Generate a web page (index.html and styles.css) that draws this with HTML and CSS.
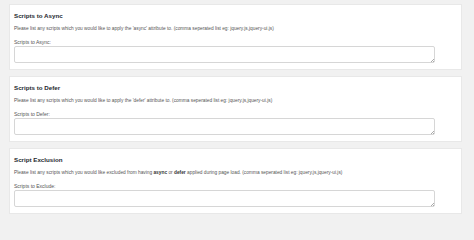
FILE: index.html
```html
<!DOCTYPE html>
<html>
<head>
<meta charset="utf-8">
<link rel="stylesheet" href="styles.css">
</head>
<body>
<div class="wrap">
  <div class="card">
    <h2 class="card-title">Scripts to Async</h2>
    <p class="desc">Please list any scripts which you would like to apply the 'async' attribute to. (comma seperated list eg: jquery.js,jquery-ui.js)</p>
    <label class="label">Scripts to Async:</label>
    <div class="field-wrap"><textarea class="field"></textarea></div>
  </div>
  <div class="card">
    <h2 class="card-title">Scripts to Defer</h2>
    <p class="desc">Please list any scripts which you would like to apply the 'defer' attribute to. (comma seperated list eg: jquery.js,jquery-ui.js)</p>
    <label class="label">Scripts to Defer:</label>
    <div class="field-wrap"><textarea class="field"></textarea></div>
  </div>
  <div class="card">
    <h2 class="card-title">Script Exclusion</h2>
    <p class="desc">Please list any scripts which you would like excluded from having <b>async</b> or <b>defer</b> applied during page load. (comma seperated list eg: jquery.js,jquery-ui.js)</p>
    <label class="label">Scripts to Exclude:</label>
    <div class="field-wrap"><textarea class="field"></textarea></div>
  </div>
</div>
</body>
</html>
```
FILE: styles.css
```css
html, body {
  margin: 0;
  padding: 0;
  background: #f1f1f1;
  font-family: "Liberation Sans", Arial, sans-serif;
  color: #23282d;
}
.wrap {
  padding: 4px 12px 0 9px;
  display: flex;
  flex-direction: column;
  gap: 6px;
}
.card {
  background: #fff;
  border: 1px solid #e8e8e8;
  box-sizing: border-box;
  height: 66px;
  padding: 7px 5px 0 4px;
  display: flex;
  flex-direction: column;
  align-items: flex-start;
}
.card-title {
  margin: 0;
  font-size: 6.2px;
  line-height: 8px;
  font-weight: 700;
  color: #23282d;
}
.desc {
  margin: 6px 0 0;
  font-size: 4.8px;
  line-height: 6px;
  color: #555;
}
.desc b {
  color: #333;
}
.label {
  margin-top: 7px;
  font-size: 5px;
  line-height: 6px;
  color: #555;
}
.field-wrap {
  position: relative;
  margin-top: 1px;
  width: 421px;
  height: 17px;
}
.field {
  display: block;
  margin: 0;
  width: 100%;
  height: 100%;
  box-sizing: border-box;
  border: 1px solid #d6d6d6;
  border-radius: 2px;
  background: #fff;
  padding: 0;
  font-size: 5px;
  resize: none;
}
.field-wrap::after {
  content: "";
  position: absolute;
  right: 1px;
  bottom: 1px;
  width: 3px;
  height: 3px;
  background: linear-gradient(135deg, transparent 45%, #aaa 45%, #aaa 58%, transparent 58%, transparent 75%, #aaa 75%, #aaa 88%, transparent 88%);
}
```
